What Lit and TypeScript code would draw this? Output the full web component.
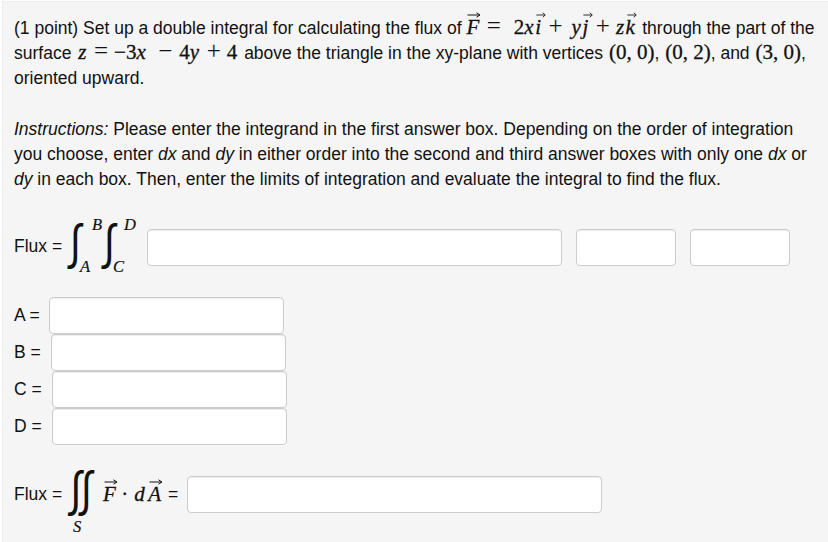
import { css, html, LitElement } from "lit";
import { customElement } from "lit/decorators.js";

const vec = (letter: string, w = 14) => html`<span class="vec"
  ><svg class="arrow" viewBox="0 0 14 6" width="${w}" height="6" preserveAspectRatio="none">
    <path d="M0.5 3H12.5M9.5 0.8L13 3L9.5 5.2" fill="none" stroke="#111" stroke-width="1" /></svg
  ><i>${letter}</i></span
>`;

@customElement("app-root")
export class AppRoot extends LitElement {
  static styles = css`
    :host {
      display: block;
      width: 828px;
      height: 542px;
      overflow: hidden;
      background: #fff;
      color: #111;
      font-family: "Liberation Sans", Arial, sans-serif;
      font-size: 17.5px;
    }
    .panel {
      height: 541px;
      margin: 1px 0 0 2px;
      padding: 14px 0 0 11px;
      box-sizing: border-box;
      background: #f5f5f5;
      border-top: 1px solid #eee;
      border-left: 1px solid #eee;
    }
    p {
      margin: 0;
      line-height: 25px;
      white-space: nowrap;
    }
    .instructions {
      margin-top: 26px;
    }
    .m {
      font-family: "Liberation Serif", "Times New Roman", serif;
      font-size: 21px;
      line-height: 1;
      -webkit-text-stroke: 0.3px #111;
    }
    .m i {
      letter-spacing: 1.5px;
    }
    .op {
      margin: 0 6px;
      font-size: 25px;
      line-height: 0;
      -webkit-text-stroke: 0;
    }
    .eq-gap {
      margin-right: 13px;
    }
    .plus-gap {
      margin-right: 9px;
    }
    .minus-gap {
      margin: 0 7px 0 11px;
    }
    .push {
      margin-left: 2px;
      margin-right: 2px;
    }
    .pt {
      margin-left: 1px;
    }
    .vec {
      position: relative;
      display: inline-block;
    }
    .arrow {
      position: absolute;
      left: 1px;
      top: -5px;
    }
    .trail {
      margin-right: 1px;
    }
    input {
      box-sizing: border-box;
      height: 37px;
      margin: 0;
      padding: 0 6px;
      background: #fff;
      border: 1px solid #ccc;
      border-radius: 4px;
      box-shadow: inset 0 1px 1px rgba(0, 0, 0, 0.075);
    }
    .wide {
      width: 415px;
    }
    .small {
      width: 100px;
    }
    .flux {
      display: flex;
      align-items: center;
    }
    .first {
      margin-top: 37px;
      height: 37px;
    }
    .first .wide {
      margin-left: 11px;
    }
    .first .small {
      margin-left: 14px;
    }
    .label {
      flex: none;
      width: 54px;
      margin-top: -3px;
    }
    .second .label {
      margin-top: -1px;
    }
    .integral {
      display: flex;
      flex: none;
      width: 34px;
      margin-top: -3px;
      align-items: center;
      font-family: "Liberation Serif", "Times New Roman", serif;
    }
    .sign {
      flex: none;
      width: 20px;
      font-family: "Noto Sans CJK SC", sans-serif;
      font-size: 46px;
      line-height: 58px;
      transform: translate(-15px, -3px) scale(0.95, 1.05);
    }
    .limits {
      display: flex;
      flex-direction: column;
      justify-content: space-between;
      align-items: flex-end;
      flex: none;
      width: 14px;
      height: 58px;
      font-size: 16.5px;
      font-style: italic;
      line-height: 16px;
      -webkit-text-stroke: 0.2px #111;
    }
    .limits .lower {
      margin-right: 12px;
    }
    .bounds {
      margin-top: 31px;
    }
    .bound {
      display: flex;
      align-items: center;
      height: 37px;
    }
    .bound input {
      width: 235px;
    }
    .bound span {
      flex: none;
    }
    .a span {
      width: 35px;
    }
    .b span {
      width: 36.5px;
    }
    .c span {
      width: 37.5px;
    }
    .second {
      margin-top: 31px;
      height: 37px;
    }
    .double {
      display: flex;
      flex-direction: column;
      align-items: flex-start;
      flex: none;
      width: 35px;
      height: 70px;
      margin-top: 11px;
      font-family: "Liberation Serif", "Times New Roman", serif;
    }
    .double .signs {
      font-family: "Noto Sans CJK SC", sans-serif;
      font-size: 46px;
      line-height: 54px;
      letter-spacing: -35px;
      transform-origin: left center;
      transform: translate(-14px, -2px) scale(0.95, 1.05);
    }
    .double i {
      font-size: 16.5px;
      line-height: 16px;
      margin-left: 5px;
      -webkit-text-stroke: 0.2px #111;
    }
    .form {
      flex: none;
      width: 65px;
    }
    .dot {
      margin: 0 6px 0 4px;
    }
    .area {
      margin-left: 2px;
    }
    .eq {
      flex: none;
      width: 19px;
    }
  `;

  render() {
    return html`<div class="panel">
      <p>
        (1 point) Set up a double integral for calculating the flux of
        <span class="m"
          >${vec("F")}<span class="op eq-gap">=</span>2<i>x</i>${vec("i", 10)}<span class="op plus-gap">+</span><i>y</i>${vec("j", 10)}<span
            class="op"
            >+</span
          ><i>z</i>${vec("k", 10)}<span class="trail"></span></span
        >
        through the part of the<br />
        surface
        <span class="m push"
          ><i>z</i><span class="op">=</span>−3<i>x</i><span class="op minus-gap">−</span>4<i>y</i><span class="op">+</span>4</span
        >
        above the triangle in the xy-plane with vertices <span class="m pt">(0, 0)</span>, <span class="m pt">(0, 2)</span>, and
        <span class="m pt">(3, 0)</span>,<br />
        oriented upward.
      </p>
      <p class="instructions">
        <em>Instructions:</em> Please enter the integrand in the first answer box. Depending on the order of integration<br />
        you choose, enter <em>dx</em> and <em>dy</em> in either order into the second and third answer boxes with only one
        <em>dx</em> or<br />
        <em>dy</em> in each box. Then, enter the limits of integration and evaluate the integral to find the flux.
      </p>
      <div class="flux first">
        <span class="label">Flux =</span>
        <span class="integral"
          ><span class="sign">∫</span
          ><span class="limits"><span>B</span><span class="lower">A</span></span></span
        >
        <span class="integral"
          ><span class="sign">∫</span
          ><span class="limits"><span>D</span><span class="lower">C</span></span></span
        >
        <input class="wide" aria-label="integrand" />
        <input class="small" aria-label="first differential" />
        <input class="small" aria-label="second differential" />
      </div>
      <div class="bounds">
        <div class="bound a"><span>A =</span><input aria-label="A" /></div>
        <div class="bound b"><span>B =</span><input aria-label="B" /></div>
        <div class="bound c"><span>C =</span><input aria-label="C" /></div>
        <div class="bound c"><span>D =</span><input aria-label="D" /></div>
      </div>
      <div class="flux second">
        <span class="label">Flux =</span>
        <span class="double"><span class="signs">∫∫</span><i>S</i></span>
        <span class="m form">${vec("F")}<span class="dot">·</span><i>d</i><span class="area">${vec("A")}</span></span>
        <span class="eq">=</span>
        <input class="wide" aria-label="flux" />
      </div>
    </div>`;
  }
}
